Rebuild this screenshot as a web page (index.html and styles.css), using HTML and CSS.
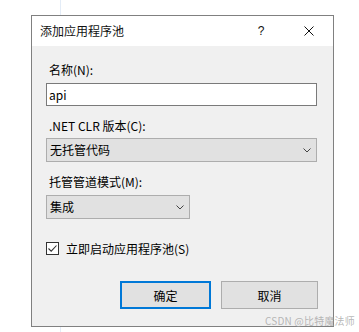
FILE: index.html
```html
<!DOCTYPE html>
<html lang="zh">
<head>
<meta charset="utf-8">
<link rel="stylesheet" href="styles.css">
</head>
<body>
<div class="dialog">
  <div class="titlebar">
    <span class="title">添加应用程序池</span>
    <span class="help">?</span>
    <span class="close">
      <svg width="10" height="10" viewBox="0 0 10 10"><path d="M0.5 0.5 L9.5 9.5 M9.5 0.5 L0.5 9.5" stroke="#111" stroke-width="1" fill="none"/></svg>
    </span>
  </div>
  <div class="content">
    <div class="label l1">名称(N):</div>
    <div class="textbox">api</div>
    <div class="label l2">.NET CLR 版本(C):</div>
    <div class="combo wide"><span>无托管代码</span>
      <svg class="chev" width="8" height="5" viewBox="0 0 8 5"><path d="M0.5 0.5 L4 4 L7.5 0.5" stroke="#444" stroke-width="1" fill="none"/></svg>
    </div>
    <div class="label l3">托管管道模式(M):</div>
    <div class="combo narrow"><span>集成</span>
      <svg class="chev" width="8" height="5" viewBox="0 0 8 5"><path d="M0.5 0.5 L4 4 L7.5 0.5" stroke="#444" stroke-width="1" fill="none"/></svg>
    </div>
    <div class="check-row">
      <span class="checkbox">
        <svg width="11" height="11" viewBox="0 0 11 11"><path d="M1.5 5.5 L4.2 8.2 L9.5 2.5" stroke="#333" stroke-width="1.1" fill="none"/></svg>
      </span>
      <span class="check-label">立即启动应用程序池(S)</span>
    </div>
    <div class="buttons">
      <div class="btn ok">确定</div>
      <div class="btn cancel">取消</div>
    </div>
  </div>
</div>
<div class="watermark">CSDN @比特魔法师</div>
</body>
</html>
```
FILE: styles.css
```css
html, body {
  margin: 0;
  padding: 0;
}
body {
  width: 359px;
  height: 332px;
  overflow: hidden;
  position: relative;
  background: #fff linear-gradient(to right, transparent 60px, #e3ecf7 60px, #e3ecf7 61px, transparent 61px);
  font-family: "Noto Sans CJK SC", "Noto Sans", sans-serif;
  font-size: 12px;
  color: #000;
}
.dialog {
  margin: 15px 0 0 31px;
  width: 303px;
  height: 312px;
  box-sizing: border-box;
  border: 1px solid #808080;
  background: #f0f0f0;
  display: flex;
  flex-direction: column;
}
.titlebar {
  height: 30px;
  background: #fff;
  display: flex;
  align-items: center;
  padding-left: 8px;
}
.title {
  flex: 1;
  font-size: 12px;
  line-height: 16px;
  color: #111;
}
.help {
  width: 10px;
  text-align: center;
  font-family: "Liberation Sans", sans-serif;
  font-size: 12px;
  color: #111;
  margin-right: 38px;
}
.close {
  width: 10px;
  height: 10px;
  margin-right: 19px;
  display: flex;
}
.content {
  padding: 16px 16px 0 14px;
  display: flex;
  flex-direction: column;
  align-items: flex-start;
}
.label {
  line-height: 16px;
  padding-left: 3px;
}
.l1 { margin-bottom: 5px; }
.l2 { margin-top: 12px; margin-bottom: 4px; }
.l3 { margin-top: 12px; margin-bottom: 5px; }
.textbox {
  width: 271px;
  height: 23px;
  box-sizing: border-box;
  border: 1px solid #7a7a7a;
  background: #fff;
  padding-left: 2px;
  line-height: 21px;
}
.combo {
  height: 24px;
  box-sizing: border-box;
  border: 1px solid #adadad;
  background: #e1e1e1;
  display: flex;
  align-items: center;
  justify-content: space-between;
  padding: 0 5px 0 3px;
  line-height: 16px;
}
.combo.wide { width: 271px; }
.combo.narrow { width: 144px; }
.chev { display: block; margin-top: 1px; }
.check-row {
  margin-top: 23px;
  display: flex;
  align-items: center;
  height: 13px;
}
.checkbox {
  width: 13px;
  height: 13px;
  box-sizing: border-box;
  border: 1px solid #333;
  background: #fff;
  display: flex;
  align-items: center;
  justify-content: center;
}
.check-label {
  margin-left: 7px;
  line-height: 16px;
}
.buttons {
  align-self: flex-end;
  margin-top: 26px;
  margin-right: -1px;
  display: flex;
  gap: 10px;
}
.btn {
  height: 28px;
  box-sizing: border-box;
  border: 1px solid #adadad;
  background: #e1e1e1;
  display: flex;
  align-items: center;
  justify-content: center;
}
.btn.ok {
  width: 91px;
  border: 2px solid #0078d7;
}
.btn.cancel {
  width: 97px;
}
.watermark {
  position: absolute;
  right: 4px;
  bottom: 5px;
  font-size: 10px;
  line-height: 12px;
  color: rgba(160, 160, 160, 0.75);
  letter-spacing: 0.2px;
}
```
